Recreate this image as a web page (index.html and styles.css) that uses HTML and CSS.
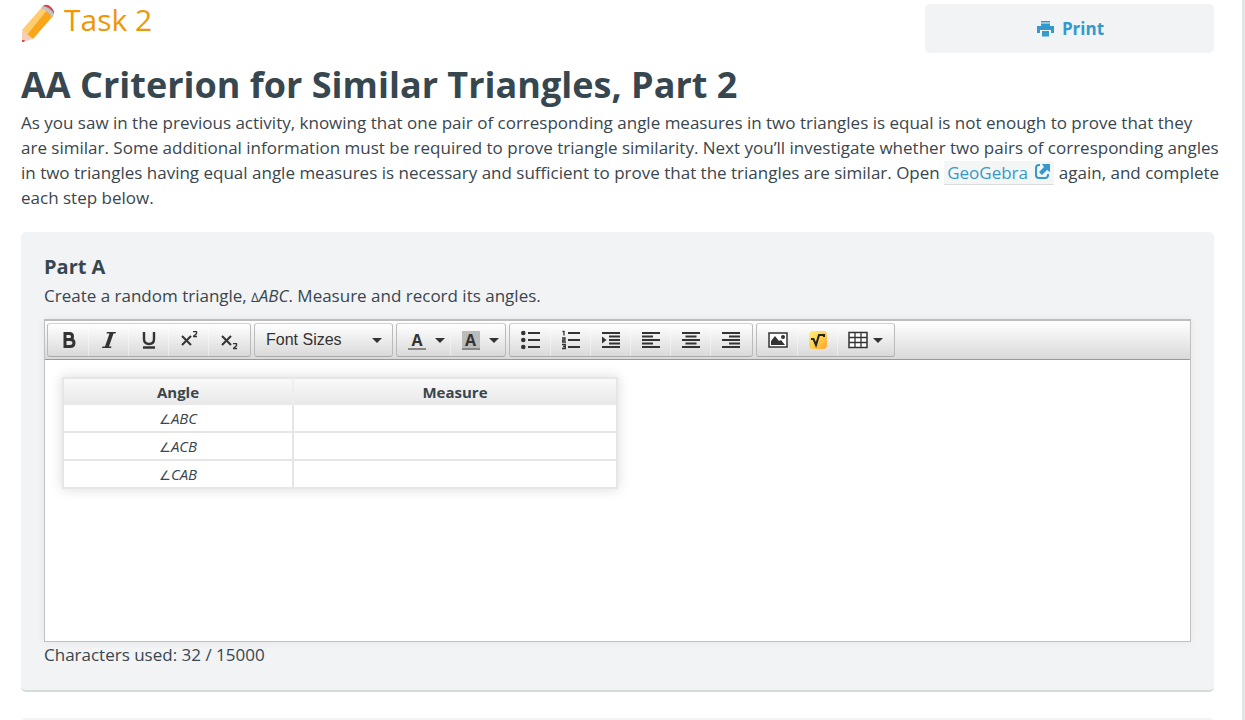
FILE: index.html
```html
<!DOCTYPE html>
<html lang="en">
<head>
  <meta charset="UTF-8" />
  <meta name="viewport" content="width=device-width, initial-scale=1.0"/>
  <title>Task 2 - AA Criterion for Similar Triangles</title>
  <link rel="stylesheet" href="styles.css">
</head>
<body>

  <main class="page">
    <!-- Header -->
    <header class="task-header">
      <div class="task-label">
        <svg class="pencil" viewBox="0 0 32 38" aria-hidden="true">
          <path fill="#ffcc70" d="M0 26 20 3l5 4L6 32z"/>
          <path fill="#faa61a" d="M5 31 25 6l6 6-20 23z"/>
          <path fill="#f4cfb8" d="M0 26l5 4 6 5-11 3z"/>
          <path fill="#e24a54" d="M0 36l3 0-1 2-2 0z"/>
          <path fill="#bfc3c7" d="M19 4l3-3q6 1 10 9l-2 4q-4-8-11-10z"/>
          <path fill="#dd4450" d="M21 2q4-3 8 1 4 4 3 7-4-7-11-8z"/>
        </svg>
        <span>Task 2</span>
      </div>
      <button type="button" class="print-btn">
        <svg class="print-icon" viewBox="0 0 17 17" aria-hidden="true">
          <path fill="currentColor" d="M4 1h9v1.500H4zM4 3.500h9V6h4v7h-3v-3H3v3H0V6h4zM5 11h7v5.500H5z"/>
        </svg>
        Print
      </button>
    </header>

    <h1>AA Criterion for Similar Triangles, Part 2</h1>
    <p class="intro">
      As you saw in the previous activity, knowing that one pair of corresponding angle measures in two triangles is equal is not enough to prove that they<br>
      are similar. Some additional information must be required to prove triangle similarity. Next you’ll investigate whether two pairs of corresponding angles<br>
      in two triangles having equal angle measures is necessary and sufficient to prove that the triangles are similar. Open
      <a class="tool-link" href="#">GeoGebra <svg class="open-icon" viewBox="0 0 15 15" aria-hidden="true"><path fill="none" stroke="currentColor" stroke-width="2" d="M5 1H4Q1 1 1 4v7q0 3 3 3h6q3 0 3-3v-1"/><path fill="currentColor" d="M7 0h8v8l-3-2-5 5-3-3 5-5z"/></svg></a>
      again, and complete<br>
      each step below.
    </p>

    <!-- Part A -->
    <section class="card">
      <h2>Part A</h2>
      <p class="question">Create a random triangle, <span class="symbol">∆</span><i>ABC</i>. Measure and record its angles.</p>

      <div class="editor">
        <div class="toolbar">
          <div class="group">
            <button type="button" aria-label="Bold"><svg viewBox="0 0 20 20"><path fill="none" stroke="#333" stroke-width="3" d="M6 3.500h4.500q3 0 3 3t-3 3H6h5q4 0 4 3.500t-4 3.500H6zV17"/></svg></button>
            <button type="button" aria-label="Italic"><svg viewBox="0 0 20 20"><path fill="#333" d="M8 2h9l-.5 1.500h-2L10 16.500h2.500L12 18H3l.5-1.500h2.500L10.500 3.500H7.500z"/></svg></button>
            <button type="button" aria-label="Underline"><svg viewBox="0 0 20 20"><path fill="none" stroke="#333" stroke-width="2.400" d="M5 2v7q0 5 5 5t5-5V2M4 17.500h12"/></svg></button>
            <button type="button" aria-label="Superscript"><svg viewBox="0 0 20 20"><path fill="none" stroke="#333" stroke-width="2" d="m3 6 9 9M12 6l-9 9"/><path fill="none" stroke="#333" stroke-width="1.300" d="M14 1.700h3.500v2L14.700 6v.5H18"/></svg></button>
            <button type="button" aria-label="Subscript"><svg viewBox="0 0 20 20"><path fill="none" stroke="#333" stroke-width="2" d="m3 6 9 9M12 6l-9 9"/><path fill="none" stroke="#333" stroke-width="1.300" d="M14 13.700h3.500v2L14.700 18v.5H18"/></svg></button>
          </div>
          <div class="group">
            <button type="button" class="font-sizes">Font Sizes <span class="caret"></span></button>
          </div>
          <div class="group">
            <button type="button" class="color-btn" aria-label="Text color"><span class="color-text">A</span><span class="caret"></span></button>
            <button type="button" class="color-btn" aria-label="Background color"><span class="color-text filled">A</span><span class="caret"></span></button>
          </div>
          <div class="group">
            <button type="button" aria-label="Bullet list"><svg viewBox="0 0 20 20"><path stroke="#333" stroke-width="2" d="M7 3h12M7 10h12M7 17h12"/><g fill="#333"><circle cx="2.300" cy="3" r="2.300"/><circle cx="2.300" cy="10" r="2.300"/><circle cx="2.300" cy="17" r="2.300"/></g></svg></button>
            <button type="button" aria-label="Numbered list"><svg viewBox="0 0 20 20"><path stroke="#333" stroke-width="2" d="M7 3h12M7 10h12M7 17h12"/><path fill="none" stroke="#333" stroke-width="1.300" d="M1.500 1.500H3V5.500M1 8h3v2H1.700v2H5M1 14.500h3.300v4H1M2 16.500h2.500"/></svg></button>
            <button type="button" aria-label="Indent"><svg viewBox="0 0 20 20"><path stroke="#333" stroke-width="2" d="M1 3h18M8 6.500h11M8 10h11M8 13.500h11M1 17h18"/><path fill="#333" d="M1 6.500v7L5.500 10z"/></svg></button>
            <button type="button" aria-label="Align left"><svg viewBox="0 0 20 20"><path stroke="#333" stroke-width="2" d="M1 3h18M1 6.500h11M1 10h18M1 13.500h11M1 17h18"/></svg></button>
            <button type="button" aria-label="Align center"><svg viewBox="0 0 20 20"><path stroke="#333" stroke-width="2" d="M1 3h18M4.500 6.500h11M1 10h18M4.500 13.500h11M1 17h18"/></svg></button>
            <button type="button" aria-label="Align right"><svg viewBox="0 0 20 20"><path stroke="#333" stroke-width="2" d="M1 3h18M8 6.500h11M1 10h18M8 13.500h11M1 17h18"/></svg></button>
          </div>
          <div class="group">
            <button type="button" aria-label="Insert image"><svg viewBox="0 0 20 20"><path fill="#fff" stroke="#333" stroke-width="1.500" d="M1 3h18v14H1z"/><path fill="#333" d="M3 15v-4l4-5 4 5 2-1 4 5z"/><circle cx="15" cy="7" r="2" fill="#333"/></svg></button>
            <button type="button" aria-label="Insert equation"><svg viewBox="0 0 20 20"><defs><linearGradient id="eq" x1="0" y1="0" x2="1" y2="1"><stop offset="0" stop-color="#fff07c"/><stop offset=".5" stop-color="#ffd04a"/><stop offset="1" stop-color="#ffa32e"/></linearGradient></defs><rect x="1" y="1" width="18" height="18" rx="4" fill="url(#eq)"/><path fill="none" stroke="#222" stroke-width="2" d="M3 9h2.500l2.500 6 3-10h5v2"/></svg></button>
            <button type="button" class="table-btn" aria-label="Table"><svg viewBox="0 0 20 20"><path fill="#fff" stroke="#333" stroke-width="1.500" d="M1 2.500h18v15H1z"/><path stroke="#333" stroke-width="1.300" d="M7 2v15M13 2v15M1 7.500h18M1 12.500h18"/></svg><span class="caret"></span></button>
          </div>
        </div>
        <div class="content">
          <table>
            <thead>
              <tr><th class="angle-col">Angle</th><th>Measure</th></tr>
            </thead>
            <tbody>
              <tr><td><span class="symbol">∠</span>ABC</td><td></td></tr>
              <tr><td><span class="symbol">∠</span>ACB</td><td></td></tr>
              <tr><td><span class="symbol">∠</span>CAB</td><td></td></tr>
            </tbody>
          </table>
        </div>
      </div>
      <p class="counter">Characters used: 32 / 15000</p>
    </section>

    <section class="card"></section>
  </main>

</body>
</html>
```
FILE: styles.css
```css
* { box-sizing: border-box; margin: 0; padding: 0; }
html { overflow: hidden; }
body {
  font-family: 'Open Sans', sans-serif;
  font-size: 17px;
  line-height: 25px;
  color: #39464e;
  background: #fff;
}
.page {
  min-height: 100vh;
  padding: 4px 28px 0 21px;
  border-right: 3px solid #e1e7e7;
}
.task-header {
  display: flex;
  justify-content: space-between;
  align-items: flex-start;
}
.task-label {
  display: flex;
  gap: 10px;
  padding-left: 1px;
  font-size: 30px;
  line-height: 32px;
  color: #f09609;
}
.pencil { width: 32px; height: 38px; }
.print-btn {
  display: flex;
  align-items: center;
  justify-content: center;
  gap: 8px;
  width: 289px;
  height: 49px;
  padding-left: 2px;
  border: none;
  border-radius: 5px;
  background: #f1f3f5;
  color: #3499cb;
  font: bold 17px 'Open Sans', sans-serif;
  cursor: pointer;
}
.print-icon { width: 17px; height: 17px; }
h1 {
  margin-top: 8px;
  font-size: 36px;
  line-height: 47px;
  color: #37474f;
}
.intro {
  margin: 2px -12px 0 0;
}
.tool-link {
  padding: 0 4px 0 3px;
  background: #f4f6f6;
  border-bottom: 1px solid #d9dddd;
  color: #3499cb;
  text-decoration: none;
}
.open-icon {
  width: 15px;
  height: 15px;
  margin-left: 3px;
}
.card {
  min-height: 60px;
  margin-top: 22px;
  padding: 22px 23px 23px;
  border-radius: 5px;
  background: #f1f3f5;
  border-bottom: 2px solid #d5dada;
}
.card + .card { margin-top: 26px; }
h2 {
  font-size: 20px;
  line-height: 26px;
  color: #37474f;
}
.question { margin: 3px 0 11px; }
.symbol {
  font-size: 13px;
  font-style: normal;
  line-height: 1;
}

/* Editor */
.editor {
  border: 1px solid #c0c0c0;
  border-top: 2px solid #bdbdbf;
  background: #fff;
  box-shadow: 0 0 8px rgba(0,0,0,0.06);
}
.toolbar {
  display: flex;
  gap: 3px;
  height: 39px;
  padding: 2px;
  background: linear-gradient(#fff, #d9d9d9);
  border-bottom: 1px solid #999;
}
.group {
  display: flex;
  height: 34px;
  padding: 0 1px;
  border: 1px solid #bbb;
  border-color: #d0d0d0 #bbb #aaa;
  border-radius: 3px;
  background: linear-gradient(#fff, #d9d9d9);
}
.group button {
  display: flex;
  align-items: center;
  justify-content: center;
  width: 40px;
  border: none;
  border-right: 1px solid rgba(255,255,255,0.4);
  background: none;
  color: #333;
  cursor: pointer;
}
.group button:last-child { border-right: none; }
.group svg { width: 20px; height: 20px; }
.caret {
  border: 5px solid transparent;
  border-top-color: #333;
  border-bottom: none;
}
.group .font-sizes {
  justify-content: space-between;
  width: 135px;
  padding: 0 9px 0 10px;
  font: 16px 'Liberation Sans', sans-serif;
}
.group .color-btn {
  width: 53px;
  gap: 9px;
  padding-left: 5px;
}
.color-text {
  width: 18px;
  height: 19px;
  border-bottom: 2px solid #888;
  font: bold 16px/18px 'Open Sans', sans-serif;
}
.color-text.filled { background: #bbb; }
.group .table-btn { width: 55px; gap: 5px; }
.content {
  min-height: 281px;
  padding: 17px;
}
table {
  width: 556px;
  border-collapse: collapse;
  font-size: 15px;
  line-height: 20px;
  text-align: center;
  box-shadow: 0 0 12px rgba(0,0,0,0.15);
}
tr { height: 28px; }
thead tr, tbody tr:first-child { height: 27px; }
th, td { border: 2px solid #e6e6e6; }
td { font-style: italic; }
thead { background: linear-gradient(#fafafa, #e8e8e8); }
th { border-bottom: none; }
th:first-child { border-right-color: #eee; }
tbody tr:first-child td { border-top: none; }
.angle-col { width: 230px; }
```
